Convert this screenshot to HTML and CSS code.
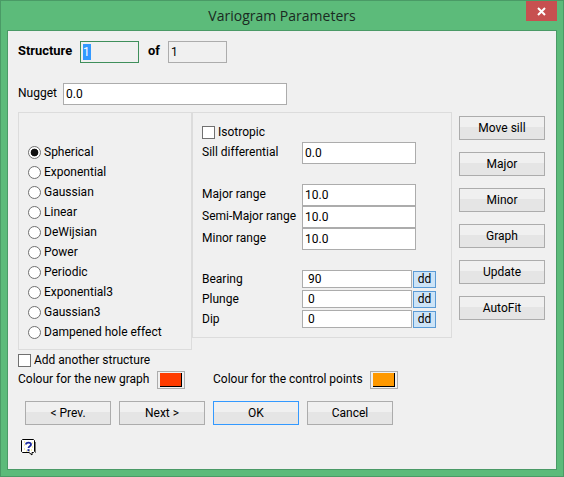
FILE: index.html
```html
<!DOCTYPE html>
<html lang="en">
<head>
<meta charset="utf-8">
<title>Variogram Parameters</title>
<link rel="stylesheet" href="styles.css">
</head>
<body>
<div class="window">
  <header class="titlebar">
    <div class="title">Variogram Parameters</div>
    <div class="close"><svg width="11" height="11" viewBox="0 0 11 11"><path d="M2 2L9 9M9 2L2 9" stroke="#fff" stroke-width="2"/></svg></div>
  </header>
  <main class="client">
    <div class="row-structure">
      <span class="bold w-structure">Structure</span>
      <div class="field disabled focus w-60"><span class="selected">1</span></div>
      <span class="bold w-of">of</span>
      <div class="field disabled w-60">1</div>
    </div>
    <div class="row-nugget">
      <span class="label w-nugget">Nugget</span>
      <div class="field w-nuggetfield">0.0</div>
    </div>
    <div class="main">
      <section class="panel-left">
        <div class="radio-row"><span class="radio on"></span>Spherical</div>
        <div class="radio-row"><span class="radio"></span>Exponential</div>
        <div class="radio-row"><span class="radio"></span>Gaussian</div>
        <div class="radio-row"><span class="radio"></span>Linear</div>
        <div class="radio-row"><span class="radio"></span>DeWijsian</div>
        <div class="radio-row"><span class="radio"></span>Power</div>
        <div class="radio-row"><span class="radio"></span>Periodic</div>
        <div class="radio-row"><span class="radio"></span>Exponential3</div>
        <div class="radio-row"><span class="radio"></span>Gaussian3</div>
        <div class="radio-row"><span class="radio"></span>Dampened hole effect</div>
      </section>
      <section class="panel-right">
        <div class="check-row"><span class="check"></span>Isotropic</div>
        <div class="param sill"><span class="label plabel">Sill differential</span><div class="field w-wide">0.0</div></div>
        <div class="range-group">
          <div class="param"><span class="label plabel">Major range</span><div class="field w-wide">10.0</div></div>
          <div class="param"><span class="label plabel">Semi-Major range</span><div class="field w-wide">10.0</div></div>
          <div class="param"><span class="label plabel">Minor range</span><div class="field w-wide">10.0</div></div>
        </div>
        <div class="angle-group">
          <div class="angle"><span class="plabel">Bearing</span><div class="field w-angle indent">90</div><div class="dd">dd</div></div>
          <div class="angle"><span class="plabel">Plunge</span><div class="field w-angle indent">0</div><div class="dd">dd</div></div>
          <div class="angle"><span class="plabel">Dip</span><div class="field w-angle indent">0</div><div class="dd">dd</div></div>
        </div>
      </section>
      <aside class="side-buttons">
        <div class="btn">Move sill</div>
        <div class="btn">Major</div>
        <div class="btn">Minor</div>
        <div class="btn">Graph</div>
        <div class="btn">Update</div>
        <div class="btn">AutoFit</div>
      </aside>
    </div>
    <div class="check-row add"><span class="check"></span>Add another structure</div>
    <div class="row-colour">
      <span class="label w-colour1">Colour for the new graph</span>
      <div class="swatch"><div class="swatch-fill red"></div></div>
      <span class="label w-colour2">Colour for the control points</span>
      <div class="swatch"><div class="swatch-fill orange"></div></div>
    </div>
    <div class="row-buttons">
      <div class="btn">&lt; Prev.</div>
      <div class="btn">Next &gt;</div>
      <div class="btn default">OK</div>
      <div class="btn">Cancel</div>
    </div>
    <div class="help">
      <svg width="15" height="17" viewBox="0 0 15 17">
        <path d="M1.5 .5H12.5L13.500 1.500V12.500L12.500 13.500H11V16L8 13.500H1.500L.5 12.500V1.500Z" fill="#fff" stroke="#000"/>
        <path d="M14.500 3V14" stroke="#777"/>
        <path d="M3 3h1M3 6h1M11 4h1M11 8h1M10 11h1M3 10h1M5 12h1M8 12h1" stroke="#e8d84a"/>
        <path d="M5 5.500C5 3 10 3 10 5.500C10 7.500 7.500 7 7.500 9" fill="none" stroke="#1c2a9c" stroke-width="1.800"/>
        <path d="M6.500 10.200h2v2h-2z" fill="#1c2a9c"/>
      </svg>
    </div>
  </main>
</div>
</body>
</html>
```
FILE: styles.css
```css
* { box-sizing: border-box; }
html, body { margin: 0; padding: 0; }
body {
  width: 564px;
  height: 477px;
  font-family: Roboto, sans-serif;
  font-size: 12px;
  line-height: 16px;
  color: #000;
  overflow: hidden;
  white-space: nowrap;
}
.window {
  width: 564px;
  height: 477px;
  background: #5cbb7a;
  border: 1px solid #4a9a66;
  display: flex;
  flex-direction: column;
}
.titlebar {
  height: 29px;
  display: flex;
  justify-content: center;
  position: relative;
}
.title {
  font-family: "Open Sans", sans-serif;
  font-size: 14px;
  line-height: 29px;
  color: #1a2a22;
}
.close {
  position: absolute;
  right: 6px;
  top: 0;
  width: 31px;
  height: 20px;
  background: #c75050;
  display: flex;
  align-items: center;
  justify-content: center;
}
.client {
  width: 550px;
  height: 440px;
  margin-left: 6px;
  background: #f0f0f0;
  border: 1px solid #4a9a66;
  padding: 10px 0 0 10px;
}
.field {
  height: 22px;
  line-height: 20px;
  border: 1px solid #acacac;
  background: #fff;
  padding: 0 2px;
}
.disabled { background: #f0f0f0; }
.focus { border-color: #3f8f5b; }
.selected {
  display: inline-block;
  background: #3399ff;
  color: #fff;
  height: 16px;
  line-height: 16px;
  padding-right: 1px;
  margin-top: 2px;
  vertical-align: top;
}
.bold { font-weight: 700; font-size: 12.9px; margin-bottom: 2px; }
.label { margin-bottom: 2px; }
.row-structure { display: flex; align-items: center; height: 22px; }
.w-structure { width: 62px; }
.w-of { width: 20px; margin-left: 9px; }
.w-60 { width: 59px; }
.row-nugget { display: flex; align-items: center; height: 22px; margin-top: 20px; }
.w-nugget { width: 45px; }
.w-nuggetfield { width: 224px; }
.main { display: flex; margin-top: 7px; height: 238px; }
.panel-left {
  width: 174px;
  height: 238px;
  border: 1px solid #dcdcdc;
  padding: 29px 0 0 9px;
}
.radio-row { display: flex; align-items: flex-start; height: 20px; line-height: 20px; }
.radio {
  align-self: center;
  width: 13px;
  height: 13px;
  border: 1px solid #707070;
  border-radius: 50%;
  background: #fff;
  margin-right: 3px;
}
.radio.on {
  background: radial-gradient(circle, #111 0, #111 3.500px, #fff 4.200px);
}
.panel-right {
  width: 260px;
  height: 226px;
  border: 1px solid #dcdcdc;
  padding: 12px 0 0 9px;
}
.check-row { display: flex; align-items: flex-start; height: 14px; line-height: 14px; }
.check {
  align-self: center;
  width: 13px;
  height: 13px;
  border: 1px solid #707070;
  background: #fff;
  margin-right: 3px;
}
.param { display: flex; align-items: center; }
.sill { margin-top: 3px; }
.plabel { width: 100px; flex: none; }
.w-wide { width: 114px; }
.range-group { margin-top: 20px; }
.angle-group { margin-top: 20px; display: flex; flex-direction: column; gap: 2px; }
.angle { display: flex; align-items: center; height: 18px; }
.w-angle { width: 110px; height: 18px; line-height: 17px; }
.indent { padding-left: 5px; }
.dd {
  width: 23px;
  height: 17px;
  align-self: flex-end;
  margin-left: 1px;
  border: 1px solid #5b9bd5;
  background: #cde4f7;
  text-align: center;
  line-height: 15px;
}
.side-buttons {
  margin-left: 7px;
  padding-top: 4px;
  display: flex;
  flex-direction: column;
  gap: 12px;
}
.btn {
  width: 86px;
  height: 24px;
  border: 1px solid #acacac;
  background: linear-gradient(#f0f0f0 0, #f0f0f0 45%, #e5e5e5 45%, #e5e5e5 100%);
  text-align: center;
  line-height: 22px;
}
.default { border-color: #3399ff; }
.add { margin-top: 3px; }
.row-colour { display: flex; align-items: center; margin-top: 4px; height: 18px; }
.w-colour1 { width: 139px; }
.w-colour2 { width: 157px; margin-left: 28px; }
.swatch {
  width: 28px;
  height: 18px;
  border: 1px solid #acacac;
  padding: 1px;
}
.swatch-fill {
  height: 100%;
  margin: 0 1px;
  border-right: 1px solid #000;
  border-bottom: 1px solid #000;
}
.red { background: #ff3c00; }
.orange { background: #ff9900; }
.row-buttons { display: flex; gap: 8px; margin-top: 12px; padding-left: 7px; }
.help { margin-top: 14px; margin-left: 3px; height: 17px; }
```
